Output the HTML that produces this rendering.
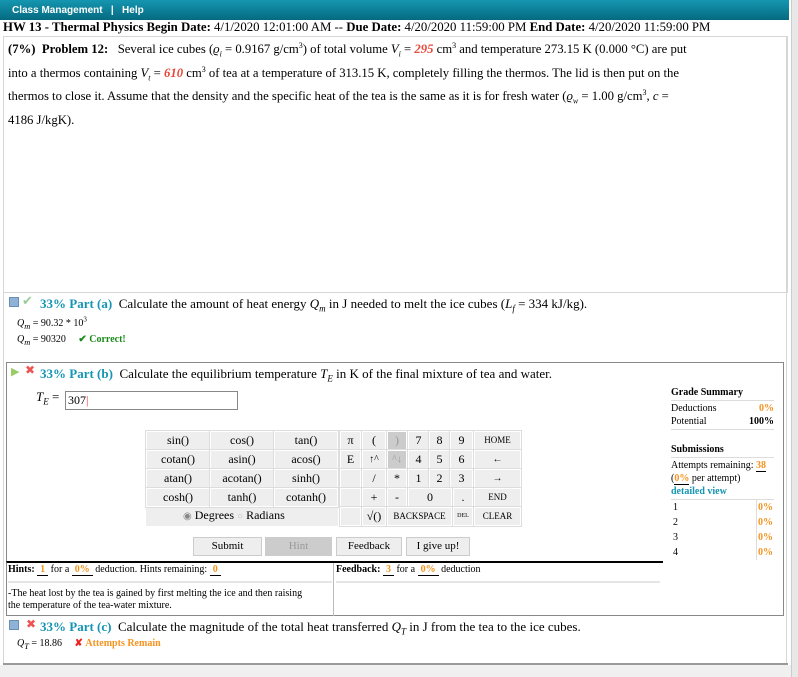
<!DOCTYPE html>
<html><head><meta charset="utf-8"><style>
*{margin:0;padding:0;box-sizing:border-box}
body{width:798px;height:677px;background:#fff;font-family:"Liberation Serif",serif;font-size:12px;color:#000;position:relative;overflow:hidden}
.a{position:absolute;white-space:nowrap}
.hdr{left:0;top:0;width:789px;height:20px;background:linear-gradient(#1596b0,#056a80);color:#fff;font:bold 10px "Liberation Sans",sans-serif;padding:5px 0 0 12px}
.k{position:absolute;background:#eee;border:1px solid #fff;outline:1px solid #ddd;text-align:center;font-size:12px;line-height:17px;height:19px}
.btn{position:absolute;top:537px;height:19px;background:#eee;border:1px solid #ccc;text-align:center;font-size:11px;line-height:17px}
.org{color:#f7931e;font-weight:bold}
.teal{color:#1595b3;font-weight:bold}
.u{border-bottom:1px solid #000;padding:0 3px}
i{font-style:italic}
sup,sub{line-height:0}
.ico{position:absolute;width:10px;height:10px}
.gs div{line-height:13px}
</style></head><body>
<div class="a hdr">Class Management &nbsp;&nbsp;|&nbsp;&nbsp; Help</div>
<div class="a" style="left:3px;top:20px;font-size:12.8px"><b>HW 13 - Thermal Physics Begin Date:</b> 4/1/2020 12:01:00 AM -- <b>Due Date:</b> 4/20/2020 11:59:00 PM <b>End Date:</b> 4/20/2020 11:59:00 PM</div>
<div class="a" style="left:3px;top:36px;width:785px;height:257px;border:1px solid #d6d6d6"></div>
<div class="a" style="left:3px;top:292px;width:1px;height:372px;background:#d6d6d6"></div>
<div class="a" style="left:786px;top:36px;width:1px;height:628px;background:#d6d6d6"></div>
<div class="a" style="left:3px;top:663px;width:785px;height:2px;background:#999"></div>
<div class="a" style="left:791px;top:0;width:7px;height:677px;background:#e8e8e8;border-left:1px solid #ccc"></div>
<div class="a" style="left:0;top:665px;width:791px;height:12px;background:#f0f0f0"></div>
<div class="a" style="left:8px;top:38px;font-size:12.7px;line-height:23.5px;white-space:normal;width:700px">
<b>(7%)&nbsp; Problem 12:</b> &nbsp; Several ice cubes (<i>ϱ<sub style="font-size:8px">i</sub></i> = 0.9167 g/cm<sup style="font-size:8px">3</sup>) of total volume <i>V<sub style="font-size:8px">i</sub></i> = <i style="color:#e8473a;font-weight:bold">295</i> cm<sup style="font-size:8px">3</sup> and temperature 273.15 K (0.000 °C) are put<br>into a thermos containing <i>V<sub style="font-size:8px">t</sub></i> = <i style="color:#e8473a;font-weight:bold">610</i> cm<sup style="font-size:8px">3</sup> of tea at a temperature of 313.15 K, completely filling the thermos. The lid is then put on the<br>thermos to close it. Assume that the density and the specific heat of the tea is the same as it is for fresh water (<i>ϱ<sub style="font-size:8px">w</sub></i> = 1.00 g/cm<sup style="font-size:8px">3</sup>, <i>c</i> =<br><span style="line-height:16px">4186 J/kgK).</span></div>

<div class="ico" style="left:9px;top:297px;background:#8fb3d6;border:1px solid #6a8fb5"></div>
<div class="a" style="left:22px;top:293px;color:#9c9;font-size:13px">✔</div>
<div class="a" style="left:40px;top:296px;font-size:13px"><span class="teal">33% Part (a)</span>&nbsp; Calculate the amount of heat energy <i>Q<sub style="font-size:9px">m</sub></i> in J needed to melt the ice cubes (<i>L<sub style="font-size:9px">f</sub></i> = 334 kJ/kg).</div>
<div class="a" style="left:17px;top:318px;font-size:10px"><i>Q<sub>m</sub></i> = 90.32 * 10<sup style="font-size:7px">3</sup></div>
<div class="a" style="left:17px;top:334px;font-size:10px"><i>Q<sub>m</sub></i> = 90320 &nbsp;&nbsp;&nbsp;&nbsp;<b style="color:#1a8a1a">✔ Correct!</b></div>

<div class="a" style="left:6px;top:362px;width:778px;height:254px;border:1px solid #888"></div>
<div class="a" style="left:11px;top:365px;color:#9c6;font-size:11px">▶</div>
<div class="a" style="left:25px;top:363px;color:#e55;font-size:12px">✖</div>
<div class="a" style="left:40px;top:366px;font-size:13px"><span class="teal">33% Part (b)</span>&nbsp; Calculate the equilibrium temperature <i>T<sub style="font-size:9px">E</sub></i> in K of the final mixture of tea and water.</div>
<div class="a" style="left:36px;top:389px;font-size:13px"><i>T<sub style="font-size:9px">E</sub></i> =</div>
<div class="a" style="left:65px;top:391px;width:173px;height:19px;border:1px solid #888;font-size:12px;padding:1px 2px">307<span style="color:#e33">|</span></div>

<div class="a gs" style="left:671px;top:386px;font-size:10px;width:103px">
<div style="font-weight:bold;border-bottom:1px solid #ddd;padding-bottom:1px">Grade Summary</div>
<div style="display:flex;justify-content:space-between;margin-top:1px"><span>Deductions</span><span class="org">0%</span></div>
<div style="display:flex;justify-content:space-between;border-bottom:1px solid #ddd;padding-bottom:1px"><span>Potential</span><b>100%</b></div>
<div style="font-weight:bold;margin-top:13px;border-bottom:1px solid #ddd;padding-bottom:1px">Submissions</div>
<div style="margin-top:1px">Attempts remaining: <span class="org" style="border-bottom:1px solid #000">38</span></div>
<div>(<span class="org" style="border-bottom:1px solid #000">0%</span> per attempt)</div>
<div class="teal" style="border-bottom:1px solid #ddd;padding-bottom:1px">detailed view</div>
<div style="display:flex"><div style="width:86px;border-right:1px solid #ddd;padding-left:2px;line-height:15px">1<br>2<br>3<br>4</div><div class="org" style="padding-left:1px;line-height:15px">0%<br>0%<br>0%<br>0%</div></div>
</div>

<div class="a" style="left:146px;top:431px;width:192px;height:95px;background:#eee"></div>
<div class="k" style="left:146px;top:431px;width:64px">sin()</div><div class="k" style="left:210px;top:431px;width:64px">cos()</div><div class="k" style="left:274px;top:431px;width:64px">tan()</div>
<div class="k" style="left:146px;top:450px;width:64px">cotan()</div><div class="k" style="left:210px;top:450px;width:64px">asin()</div><div class="k" style="left:274px;top:450px;width:64px">acos()</div>
<div class="k" style="left:146px;top:469px;width:64px">atan()</div><div class="k" style="left:210px;top:469px;width:64px">acotan()</div><div class="k" style="left:274px;top:469px;width:64px">sinh()</div>
<div class="k" style="left:146px;top:488px;width:64px">cosh()</div><div class="k" style="left:210px;top:488px;width:64px">tanh()</div><div class="k" style="left:274px;top:488px;width:64px">cotanh()</div>
<div class="a" style="left:183px;top:508px;font-size:12px"><span style="color:#888;font-size:10px">◉</span> Degrees <span style="color:#bbb;font-size:10px">○</span> Radians</div>

<div class="k" style="left:340px;top:431px;width:21px">π</div><div class="k" style="left:362px;top:431px;width:24px">(</div><div class="k" style="left:387px;top:431px;width:20px;background:#ccc;color:#999">)</div><div class="k" style="left:408px;top:431px;width:21px">7</div><div class="k" style="left:429px;top:431px;width:21px">8</div><div class="k" style="left:450px;top:431px;width:23px">9</div><div class="k" style="left:474px;top:431px;width:47px;font-size:9px">HOME</div>
<div class="k" style="left:340px;top:450px;width:21px">E</div><div class="k" style="left:362px;top:450px;width:24px;font-size:10px">↑^</div><div class="k" style="left:387px;top:450px;width:20px;background:#ccc;color:#999;font-size:10px">^↓</div><div class="k" style="left:408px;top:450px;width:21px">4</div><div class="k" style="left:429px;top:450px;width:21px">5</div><div class="k" style="left:450px;top:450px;width:23px">6</div><div class="k" style="left:474px;top:450px;width:47px;font-size:10px">←</div>
<div class="k" style="left:340px;top:469px;width:21px"></div><div class="k" style="left:362px;top:469px;width:24px">/</div><div class="k" style="left:387px;top:469px;width:20px">*</div><div class="k" style="left:408px;top:469px;width:21px">1</div><div class="k" style="left:429px;top:469px;width:21px">2</div><div class="k" style="left:450px;top:469px;width:23px">3</div><div class="k" style="left:474px;top:469px;width:47px;font-size:10px">→</div>
<div class="k" style="left:340px;top:488px;width:21px"></div><div class="k" style="left:362px;top:488px;width:24px">+</div><div class="k" style="left:387px;top:488px;width:20px">-</div><div class="k" style="left:408px;top:488px;width:44px">0</div><div class="k" style="left:453px;top:488px;width:20px">.</div><div class="k" style="left:474px;top:488px;width:47px;font-size:9px">END</div>
<div class="k" style="left:340px;top:507px;width:21px"></div><div class="k" style="left:362px;top:507px;width:24px">√()</div><div class="k" style="left:387px;top:507px;width:65px;font-size:9px">BACKSPACE</div><div class="k" style="left:453px;top:507px;width:20px;font-size:6px">DEL</div><div class="k" style="left:474px;top:507px;width:47px;font-size:9px">CLEAR</div>

<div class="btn" style="left:193px;width:69px">Submit</div>
<div class="btn" style="left:265px;width:67px;background:#ccc;color:#999">Hint</div>
<div class="btn" style="left:336px;width:66px">Feedback</div>
<div class="btn" style="left:406px;width:64px">I give up!</div>

<div class="a" style="left:6px;top:561px;width:657px;height:55px;border-top:2px solid #000;border-left:1px solid #888"></div>
<div class="a" style="left:333px;top:563px;width:1px;height:53px;background:#bbb"></div>
<div class="a" style="left:8px;top:564px;font-size:10px"><b>Hints:</b> <span class="u org">1</span> for a <span class="u org">0%</span> deduction. Hints remaining: <span class="u org">0</span></div>
<div class="a" style="left:336px;top:564px;font-size:10px"><b>Feedback:</b> <span class="u org">3</span> for a <span class="u org">0%</span> deduction</div>
<div class="a" style="left:8px;top:581px;width:324px;height:2px;background:#e5e5e5"></div>
<div class="a" style="left:336px;top:581px;width:324px;height:2px;background:#e5e5e5"></div>
<div class="a" style="left:8px;top:588px;font-size:10px;line-height:12px">-The heat lost by the tea is gained by first melting the ice and then raising<br>the temperature of the tea-water mixture.</div>

<div class="ico" style="left:9px;top:620px;background:#8fb3d6;border:1px solid #6a8fb5"></div>
<div class="a" style="left:26px;top:617px;color:#e55;font-size:12px">✖</div>
<div class="a" style="left:40px;top:619px;font-size:13px"><span class="teal">33% Part (c)</span>&nbsp; Calculate the magnitude of the total heat transferred <i>Q<sub style="font-size:9px">T</sub></i> in J from the tea to the ice cubes.</div>
<div class="a" style="left:17px;top:638px;font-size:10px"><i>Q<sub>T</sub></i> = 18.86 &nbsp;&nbsp;&nbsp;&nbsp;<b style="color:#e22">✘</b> <span class="org">Attempts Remain</span></div>
</body></html>
